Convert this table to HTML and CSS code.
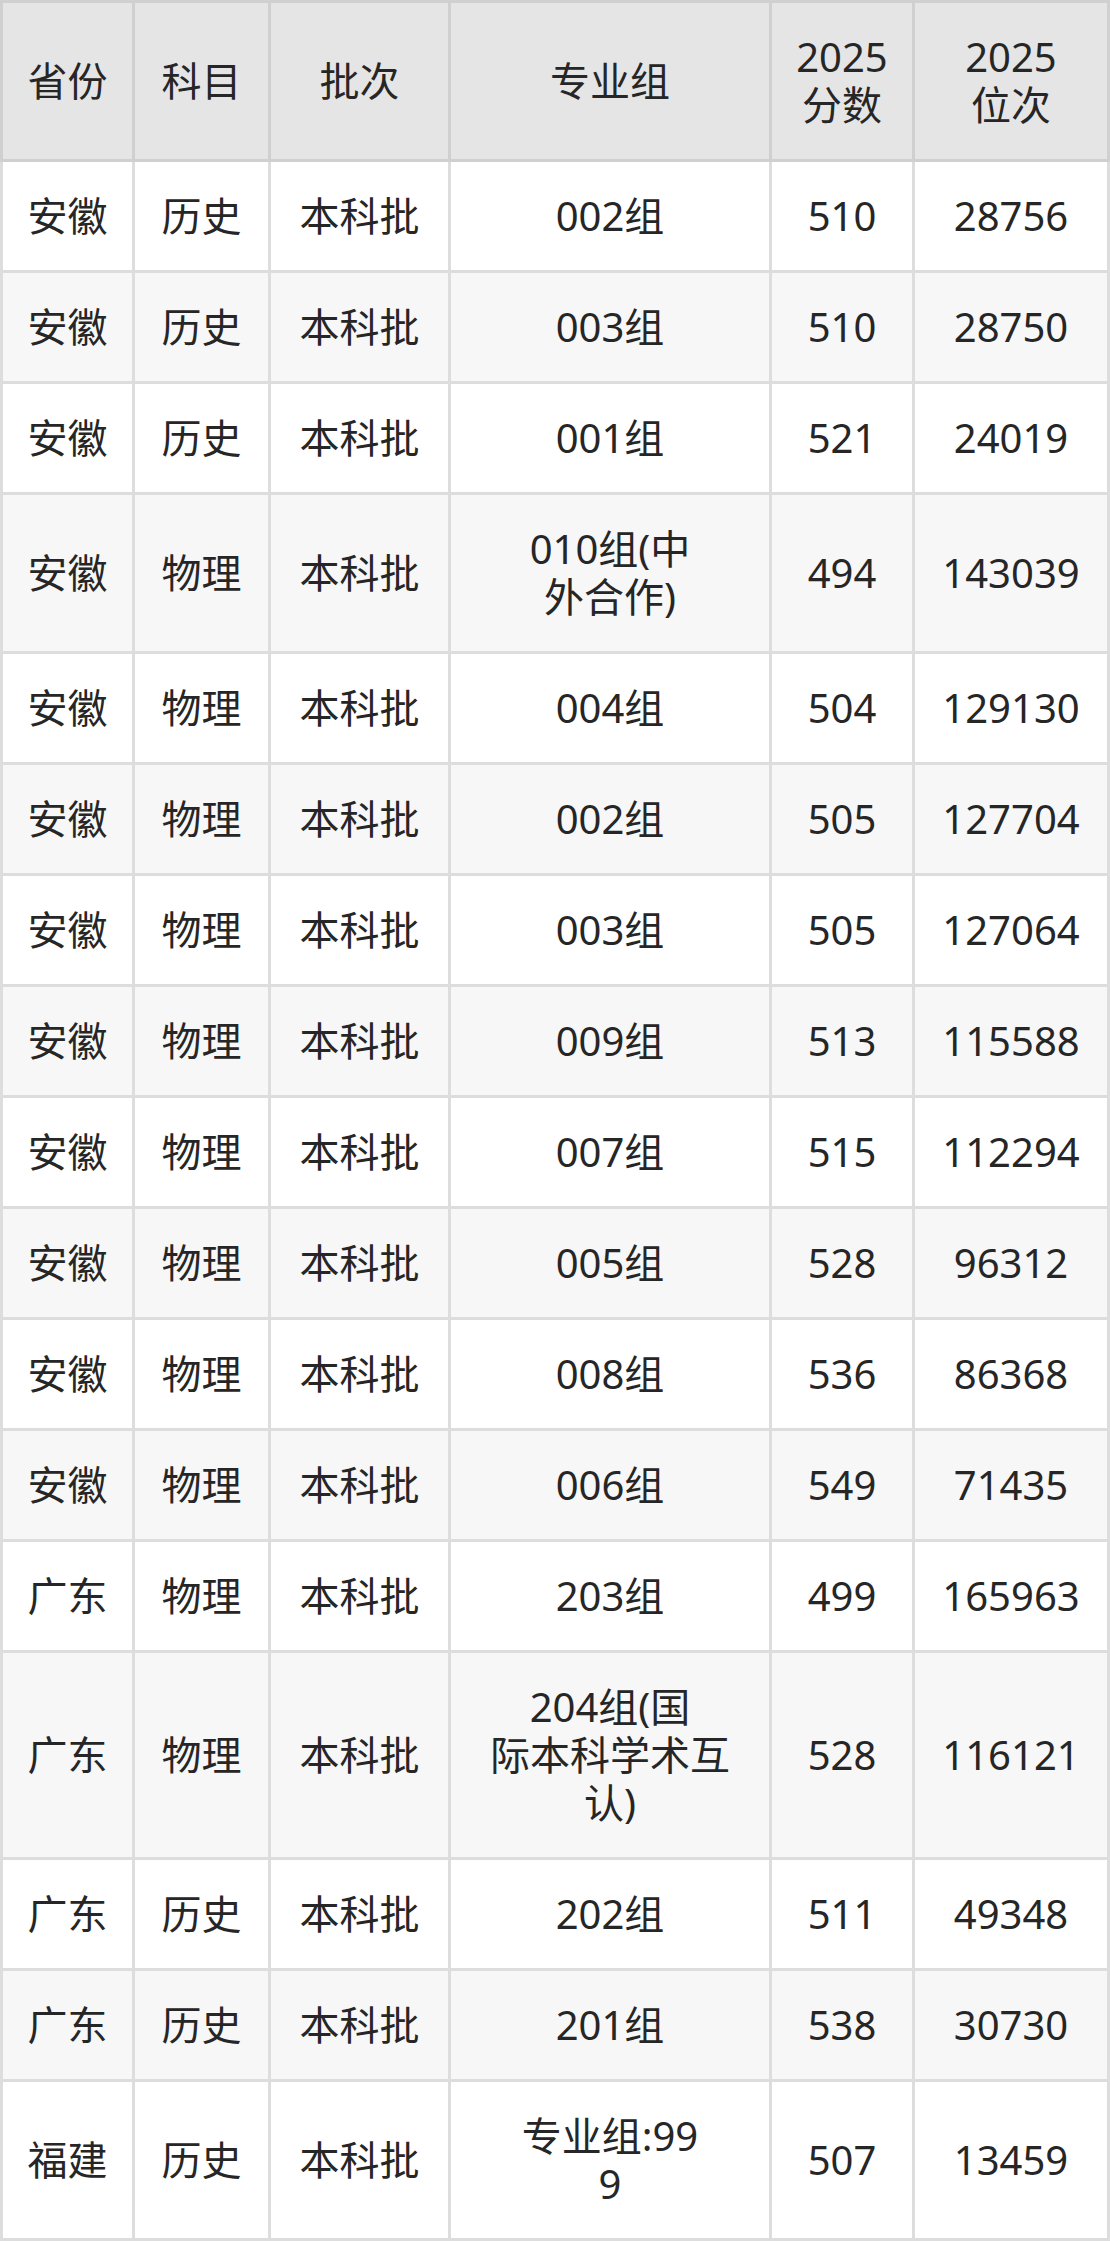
FILE: index.html
```html
<!DOCTYPE html>
<html lang="zh-CN">
<head>
<meta charset="utf-8">
<title>录取分数</title>
<link rel="stylesheet" href="styles.css">
</head>
<body>
<table class="score-table">
  <colgroup>
    <col class="c1"><col class="c2"><col class="c3"><col class="c4"><col class="c5"><col class="c6">
  </colgroup>
  <thead>
    <tr>
      <th>省份</th><th>科目</th><th>批次</th><th>专业组</th><th>2025<br>分数</th><th>2025<br>位次</th>
    </tr>
  </thead>
  <tbody>
    <tr><td>安徽</td><td>历史</td><td>本科批</td><td>002组</td><td>510</td><td>28756</td></tr>
    <tr><td>安徽</td><td>历史</td><td>本科批</td><td>003组</td><td>510</td><td>28750</td></tr>
    <tr><td>安徽</td><td>历史</td><td>本科批</td><td>001组</td><td>521</td><td>24019</td></tr>
    <tr><td>安徽</td><td>物理</td><td>本科批</td><td>010组(中<br>外合作)</td><td>494</td><td>143039</td></tr>
    <tr><td>安徽</td><td>物理</td><td>本科批</td><td>004组</td><td>504</td><td>129130</td></tr>
    <tr><td>安徽</td><td>物理</td><td>本科批</td><td>002组</td><td>505</td><td>127704</td></tr>
    <tr><td>安徽</td><td>物理</td><td>本科批</td><td>003组</td><td>505</td><td>127064</td></tr>
    <tr><td>安徽</td><td>物理</td><td>本科批</td><td>009组</td><td>513</td><td>115588</td></tr>
    <tr><td>安徽</td><td>物理</td><td>本科批</td><td>007组</td><td>515</td><td>112294</td></tr>
    <tr><td>安徽</td><td>物理</td><td>本科批</td><td>005组</td><td>528</td><td>96312</td></tr>
    <tr><td>安徽</td><td>物理</td><td>本科批</td><td>008组</td><td>536</td><td>86368</td></tr>
    <tr><td>安徽</td><td>物理</td><td>本科批</td><td>006组</td><td>549</td><td>71435</td></tr>
    <tr><td>广东</td><td>物理</td><td>本科批</td><td>203组</td><td>499</td><td>165963</td></tr>
    <tr><td>广东</td><td>物理</td><td>本科批</td><td>204组(国<br>际本科学术互<br>认)</td><td>528</td><td>116121</td></tr>
    <tr><td>广东</td><td>历史</td><td>本科批</td><td>202组</td><td>511</td><td>49348</td></tr>
    <tr><td>广东</td><td>历史</td><td>本科批</td><td>201组</td><td>538</td><td>30730</td></tr>
    <tr><td>福建</td><td>历史</td><td>本科批</td><td>专业组:99<br>9</td><td>507</td><td>13459</td></tr>
  </tbody>
</table>
</body>
</html>
```

FILE: styles.css
```css
html, body {
  margin: 0;
  padding: 0;
  background: #ffffff;
}

.score-table {
  width: 1110px;
  table-layout: fixed;
  border-collapse: separate;
  border-spacing: 0;
  font-family: "Noto Sans", "Noto Sans CJK SC", sans-serif;
  font-size: 40px;
  line-height: 48px;
  color: #262626;
}

.c1 { width: 135px; }
.c2 { width: 136px; }
.c3 { width: 180px; }
.c4 { width: 321px; }
.c5 { width: 143px; }
.c6 { width: 195px; }

.score-table th,
.score-table td {
  padding: 30px 0;
  text-align: center;
  vertical-align: middle;
  white-space: nowrap;
  font-weight: normal;
  border-right: 3px solid #dddddd;
  border-bottom: 3px solid #dddddd;
}

.score-table th {
  background: #e5e5e5;
  border-color: #d0d0d0;
  border-top: 3px solid #d0d0d0;
}

.score-table th:first-child {
  border-left: 3px solid #d0d0d0;
}

.score-table td:first-child {
  border-left: 3px solid #dddddd;
}

.score-table tbody tr:nth-child(even) td {
  background: #f7f7f7;
}
```
